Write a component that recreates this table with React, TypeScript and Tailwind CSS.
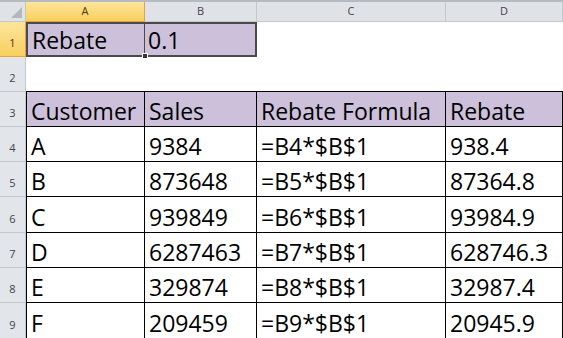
// Excel 2010 sheet: rebate table with formulas shown as text.

const cols = [
  { key: 'A', w: 'w-[119px]' },
  { key: 'B', w: 'w-[112px]' },
  { key: 'C', w: 'w-[189px]' },
  { key: 'D', w: 'w-[117px]' },
]

const table = [
  ['Customer', 'Sales', 'Rebate Formula', 'Rebate'],
  ['A', '9384', '=B4*$B$1', '938.4'],
  ['B', '873648', '=B5*$B$1', '87364.8'],
  ['C', '939849', '=B6*$B$1', '93984.9'],
  ['D', '6287463', '=B7*$B$1', '628746.3'],
  ['E', '329874', '=B8*$B$1', '32987.4'],
  ['F', '209459', '=B9*$B$1', '20945.9'],
]

const rowH = ['h-[35px]', 'h-[35px]', 'h-[35px]', 'h-[36px]', 'h-[35px]', 'h-[35px]', 'h-[36px]']

const font = { fontFamily: '"Open Sans", "Noto Sans", sans-serif' }

function RowHead({ n, selected }: { n: number; selected?: boolean }) {
  return (
    <div
      className={
        selected
          ? 'w-[26px] shrink-0 flex items-end justify-center pb-[5px] text-[11px] text-[#4b3a10] bg-gradient-to-b from-[#fde59a] to-[#f8cf5c] border-r border-b border-r-[#e8a33a] border-b-[#e8a33a]'
          : 'w-[26px] shrink-0 flex items-end justify-center pb-[5px] text-[11px] text-[#444] bg-[#e2e6eb] border-r border-b border-[#c3c8ce]'
      }
      style={font}
    >
      {n}
    </div>
  )
}

export default function App() {
  return (
    <div className="w-[563px] h-[338px] overflow-hidden bg-white text-black" style={font}>
      <div className="h-[2px] bg-[#b6bbc1]" />
      {/* column headers */}
      <div className="flex h-[20px]">
        <div className="w-[26px] shrink-0 flex items-end justify-end pr-[3px] pb-[3px] bg-[#dfe3e8] border-r border-b border-[#c3c8ce]">
          <svg width="11" height="11" viewBox="0 0 11 11">
            <path d="M11 0 L11 11 L0 11 Z" fill="#b3b8be" />
          </svg>
        </div>
        {cols.map((c) => (
          <div
            key={c.key}
            className={
              c.key === 'A'
                ? `${c.w} shrink-0 flex items-center justify-center text-[11px] text-[#4b3a10] bg-gradient-to-b from-[#fde59a] to-[#f8cf5c] border-r border-b border-r-[#e8a33a] border-b-[#e8a33a]`
                : `${c.w} shrink-0 flex items-center justify-center text-[11px] text-[#444] bg-[#dfe3e8] border-r border-b border-[#c3c8ce]`
            }
          >
            {c.key}
          </div>
        ))}
      </div>

      {/* row 1 */}
      <div className="flex h-[35px]">
        <RowHead n={1} selected />
        <div className="relative w-[119px] shrink-0 flex items-end pl-[4px] pb-[3px] text-[23px] leading-[23px] bg-[#ccc0da] border-2 border-r border-[#4a4a4a]">
          Rebate
          <div className="absolute -right-[4px] -bottom-[4px] w-[6px] h-[6px] bg-[#333] border border-white" />
        </div>
        <div className="w-[112px] shrink-0 flex items-end pl-[3px] pb-[3px] text-[23px] leading-[23px] bg-[#ccc0da] border-t-2 border-b-2 border-r-2 border-[#4a4a4a]">
          0.1
        </div>
      </div>

      {/* row 2 */}
      <div className="flex h-[35px]">
        <RowHead n={2} />
        <div className="w-[537px] border-b border-black" />
      </div>

      {table.map((r, i) => (
        <div key={i} className={`flex ${rowH[i]}`}>
          <RowHead n={i + 3} />
          {r.map((v, j) => (
            <div
              key={j}
              className={`${cols[j].w} shrink-0 flex items-end pl-[4px] pb-[3px] text-[23px] leading-[23px] whitespace-nowrap border-r border-b border-black ${
                i === 0 ? 'bg-[#ccc0da]' : 'bg-white'
              } ${j === 0 ? 'border-l' : ''}`}
            >
              {v}
            </div>
          ))}
        </div>
      ))}
    </div>
  )
}
